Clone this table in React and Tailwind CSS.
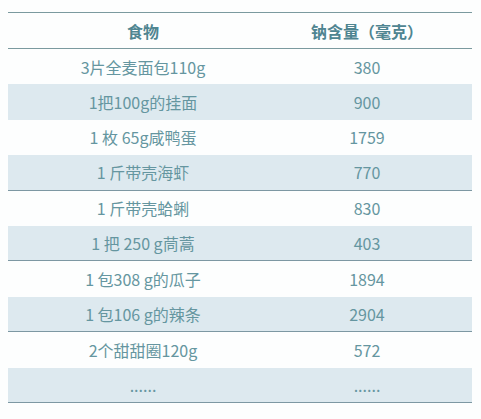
import React from "react";

const rows = [
  ["3片全麦面包110g", "380", false, false],
  ["1把100g的挂面", "900", true, false],
  ["1 枚 65g咸鸭蛋", "1759", false, false],
  ["1 斤带壳海虾", "770", true, true],
  ["1 斤带壳蛤蜊", "830", false, false],
  ["1 把 250 g茼蒿", "403", true, true],
  ["1 包308 g的瓜子", "1894", false, false],
  ["1 包106 g的辣条", "2904", true, true],
  ["2个甜甜圈120g", "572", false, false],
  ["......", "......", true, true],
];

export default function App() {
  return (
    <div
      className="w-[481px] h-[419px] bg-[#fdfefe] pt-[12px] px-[8px]"
      style={{ fontFamily: '"Microsoft YaHei", "Noto Sans CJK SC", "Noto Sans", sans-serif' }}
    >
      <div className="w-[464px]">
        <div className="grid grid-cols-[270px_178px] h-[37px] border-y border-[#7b9a9f] items-center text-[16px] font-bold text-[#4f8591]">
          <div className="text-center">食物</div>
          <div className="text-center">钠含量（毫克）</div>
        </div>
        {rows.map(([a, b, shade, border], i) => (
          <div
            key={i}
            className={
              "grid grid-cols-[270px_178px] h-[35.4px] items-center text-[16px] text-[#6596a0] " +
              (shade ? "bg-[#dde9ef] " : "bg-[#fdfefe] ") +
              (border ? "border-b border-[#7d98a3]" : "")
            }
          >
            <div className="text-center">{a}</div>
            <div className="text-center">{b}</div>
          </div>
        ))}
      </div>
    </div>
  );
}
